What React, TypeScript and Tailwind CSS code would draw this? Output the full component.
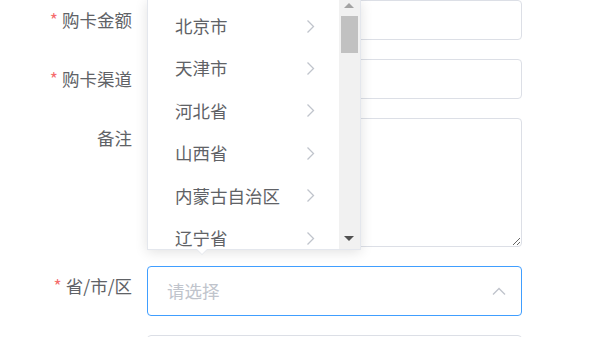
import React from "react";

const font = { fontFamily: '"Noto Sans CJK SC", "Noto Sans", sans-serif' };

function Label({ text, required }: { text: string; required?: boolean }) {
  return (
    <div className="w-[147px] shrink-0 pr-[15px] text-right text-[17.5px] leading-[40px] text-[#606266]">
      {required && <span className="mr-[4px] text-[#f56c6c]">*</span>}
      {text}
    </div>
  );
}

function Chevron() {
  return (
    <svg width="9" height="15" viewBox="0 0 9 15" fill="none">
      <polyline points="1.5,1.5 7.5,7.5 1.5,13.5" stroke="#c0c4cc" strokeWidth="1.3" />
    </svg>
  );
}

const items = ["北京市", "天津市", "河北省", "山西省", "内蒙古自治区", "辽宁省"];

export default function App() {
  return (
    <div className="relative h-[337px] w-[609px] overflow-hidden bg-white" style={font}>
      <div className="flex flex-col gap-[19px]">
        <div className="flex">
          <Label text="购卡金额" required />
          <div className="h-[40px] w-[375px] rounded-[4px] border border-[#dcdfe6]" />
        </div>
        <div className="flex">
          <Label text="购卡渠道" required />
          <div className="h-[40px] w-[375px] rounded-[4px] border border-[#dcdfe6]" />
        </div>
        <div className="flex">
          <Label text="备注" />
          <textarea className="block h-[129px] w-[375px] resize-y rounded-[4px] border border-[#dcdfe6] outline-none" />
        </div>
        <div className="flex">
          <Label text="省/市/区" required />
          <div className="flex h-[50px] w-[375px] items-center justify-between rounded-[4px] border border-[#409eff] pl-[19px] pr-[15px]">
            <span className="text-[17.5px] text-[#c0c4cc]">请选择</span>
            <svg width="14" height="9" viewBox="0 0 14 9" fill="none">
              <polyline points="1,7.5 7,1.5 13,7.5" stroke="#c0c4cc" strokeWidth="1.4" />
            </svg>
          </div>
        </div>
        <div className="flex">
          <Label text="" />
          <div className="h-[40px] w-[375px] rounded-[4px] border border-[#dcdfe6]" />
        </div>
      </div>

      {/* Cascader dropdown */}
      <div className="absolute left-[147px] top-0 h-[250px] w-[214px] border border-t-0 border-[#e4e7ed] bg-white shadow-[0_2px_12px_rgba(0,0,0,0.12)]">
        <div className="flex h-full overflow-hidden">
          <div className="w-[191px] pt-[5px]">
            {items.map((it) => (
              <div key={it} className="flex h-[42.4px] items-center justify-between pl-[27px] pr-[24px] text-[17.5px] text-[#606266]">
                <span>{it}</span>
                <Chevron />
              </div>
            ))}
          </div>
          <div className="relative w-[21px] bg-[#f1f1f1]">
            <div className="absolute left-[5px] top-[3px] h-0 w-0 border-x-[5px] border-b-[5px] border-x-transparent border-b-[#a3a3a3]" />
            <div className="absolute left-[2px] top-[16px] h-[37px] w-[17px] bg-[#c1c1c1]" />
            <div className="absolute bottom-[8px] left-[5px] h-0 w-0 border-x-[5px] border-t-[5px] border-x-transparent border-t-[#505050]" />
          </div>
        </div>
        <div className="absolute -bottom-[6px] left-[48px] h-0 w-0 border-x-[6px] border-t-[6px] border-x-transparent border-t-[#e4e7ed]" />
        <div className="absolute -bottom-[5px] left-[49px] h-0 w-0 border-x-[5px] border-t-[5px] border-x-transparent border-t-white" />
      </div>
    </div>
  );
}
